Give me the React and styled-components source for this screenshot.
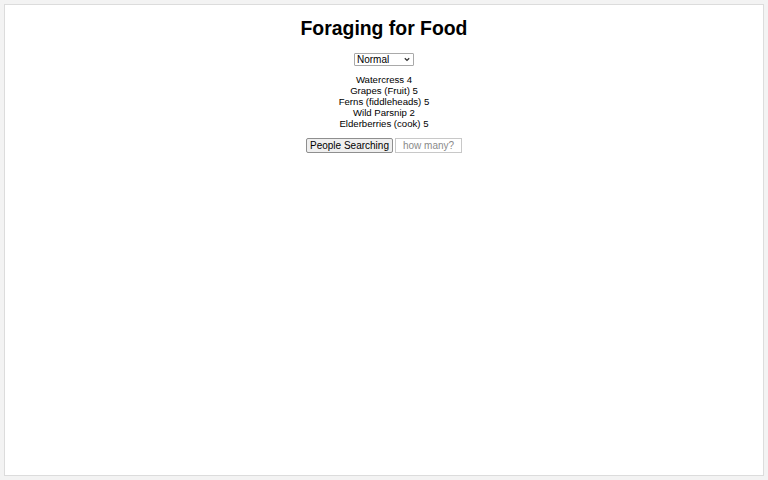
import React, { useState } from "react";
import styled, { createGlobalStyle } from "styled-components";

const Global = createGlobalStyle`
  html, body { margin: 0; padding: 0; }
  body {
    background: #f3f3f3;
    font-family: "Liberation Sans", Arial, sans-serif;
    color: #000;
  }
`;

const Page = styled.div`
  padding: 4px;
`;

const Panel = styled.main`
  box-sizing: border-box;
  height: 472px;
  background: #fff;
  border: 1px solid #dcdcdc;
  display: flex;
  flex-direction: column;
  align-items: center;
  padding-top: 12px;
`;

const Title = styled.h1`
  margin: 0;
  font-size: 19.4px;
  line-height: 22px;
  font-weight: bold;
`;

const SelectWrap = styled.div`
  position: relative;
  margin-top: 14px;
  width: 60px;
  height: 13px;
`;

const Mode = styled.select`
  appearance: none;
  box-sizing: border-box;
  display: block;
  width: 60px;
  height: 13px;
  font-family: "Liberation Sans", Arial, sans-serif;
  font-size: 10px;
  line-height: 11px;
  padding: 0 0 0 2px;
  border: 1px solid #a9a9a9;
  border-radius: 1px;
  background: #fff;
  color: #000;
`;

const Chevron = styled.svg`
  position: absolute;
  right: 4px;
  top: 4px;
  width: 6px;
  height: 5px;
  pointer-events: none;
`;

const Crops = styled.ul`
  list-style: none;
  margin: 8px 0 0 0;
  padding: 0;
  text-align: center;
  font-size: 9.6px;
  line-height: 11px;
`;

const Crop = styled.li``;

const Controls = styled.div`
  margin-top: 9px;
  display: flex;
  gap: 2px;
  align-items: center;
`;

const SearchButton = styled.button`
  height: 15px;
  width: 87px;
  padding: 0;
  font-family: "Liberation Sans", Arial, sans-serif;
  font-size: 10px;
  color: #000;
  background: #efefef;
  border: 1px solid #8f8f8f;
  border-radius: 2px;
`;

const CountInput = styled.input`
  box-sizing: border-box;
  height: 15px;
  width: 67px;
  padding: 0 2px;
  font-family: "Liberation Sans", Arial, sans-serif;
  font-size: 10px;
  text-align: center;
  border: 1px solid #c8c8c8;
  &::placeholder { color: #8a8a8a; }
`;

const crops = [
  ["Watercress", 4],
  ["Grapes (Fruit)", 5],
  ["Ferns (fiddleheads)", 5],
  ["Wild Parsnip", 2],
  ["Elderberries (cook)", 5],
];

export default function App() {
  const [mode, setMode] = useState("Normal");
  return (
    <Page>
      <Global />
      <Panel>
        <Title>Foraging for Food</Title>
        <SelectWrap>
          <Mode value={mode} onChange={(e) => setMode(e.target.value)}>
            <option>Normal</option>
            <option>Hard</option>
          </Mode>
          <Chevron viewBox="0 0 6 5">
            <path d="M0.8 1.2 L3 3.4 L5.2 1.2" fill="none" stroke="#333" strokeWidth="1.3" />
          </Chevron>
        </SelectWrap>
        <Crops>
          {crops.map(([name, n]) => (
            <Crop key={name}>
              {name} {n}
            </Crop>
          ))}
        </Crops>
        <Controls>
          <SearchButton>People Searching</SearchButton>
          <CountInput placeholder="how many?" />
        </Controls>
      </Panel>
    </Page>
  );
}
